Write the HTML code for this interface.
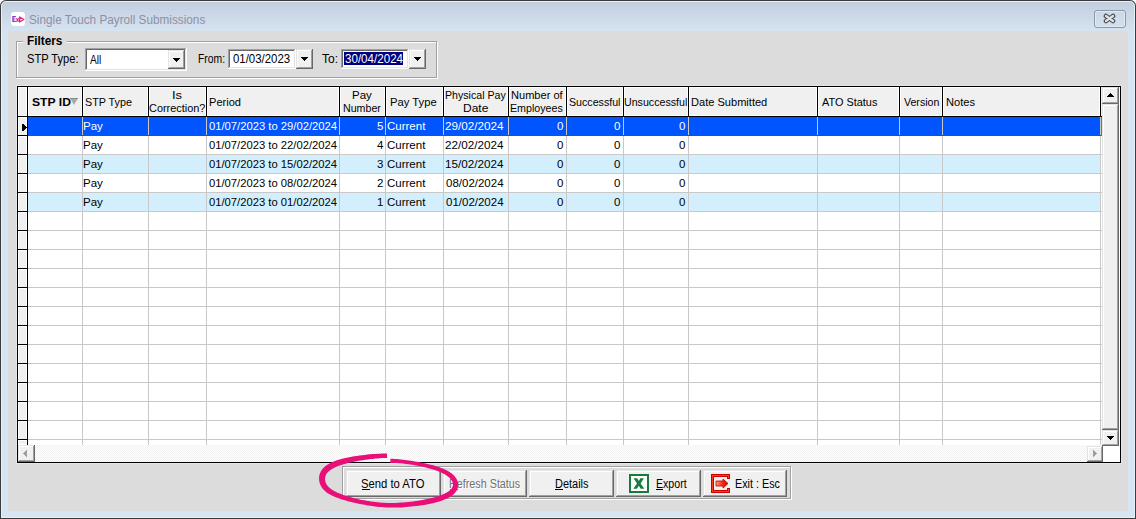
<!DOCTYPE html>
<html><head><meta charset="utf-8"><style>
html,body{margin:0;padding:0;}
body{width:1136px;height:519px;overflow:hidden;position:relative;background:#fff;font-family:"Liberation Sans", sans-serif;}
div{position:absolute;box-sizing:border-box;}
.tx{position:absolute;white-space:pre;line-height:20px;transform-origin:0 0;font-family:"Liberation Sans", sans-serif;}
</style></head><body>
<div style="left:0px;top:0px;width:1136px;height:519px;background:linear-gradient(#bfcddc 0px,#c9d7e6 14px,#d5e2f0 30px,#d7e4f2 60px);border-radius:6px 6px 0 0;box-shadow:inset 0 0 0 1px #3b3b3b, inset 0 0 0 2px #e9f0f7"></div>
<div style="left:11px;top:12px;width:14px;height:14px;background:#fff;border-radius:3px"></div>
<svg style="position:absolute;left:11px;top:12px" width="14" height="14" viewBox="0 0 14 14"><defs><linearGradient id="eg" x1="0" x2="1"><stop offset="0" stop-color="#7b2fb8"/><stop offset="1" stop-color="#ea2a7a"/></linearGradient></defs><path d="M1.3 4 H4.8 V5.2 H2.6 V6.4 H4.4 V7.6 H2.6 V8.8 H4.8 V10 H1.3 Z" fill="#8a35c0"/><path d="M5.4 6.2 L7.6 9.8 M7.6 6.2 L5.4 9.8" stroke="#b02aa0" stroke-width="1.1"/><path d="M8.6 5 L12.8 7.5 L8.6 10 Z" fill="none" stroke="#e8287e" stroke-width="1.4" stroke-linejoin="round"/></svg>
<div style="left:1094px;top:10px;width:32px;height:18px;border:1px solid #8d98a6;border-radius:3px;box-sizing:border-box;background:linear-gradient(#ccd8e5,#d4e0ed);box-shadow:inset 0 0 0 1px #e3eaf2"></div>
<svg style="position:absolute;left:1103px;top:13px" width="14" height="12" viewBox="0 0 14 12"><path d="M3 3 L10 8 M10 3 L3 8" stroke="#434956" stroke-width="4.6" fill="none" stroke-linecap="round"/><path d="M3 3 L10 8 M10 3 L3 8" stroke="#e2e2e4" stroke-width="2.3" fill="none" stroke-linecap="round"/></svg>
<div style="left:8px;top:31px;width:1120px;height:480px;background:#dcdcdc"></div>
<div style="left:17px;top:42px;width:421px;height:37px;border:1px solid #fff;box-sizing:border-box"></div><div style="left:16px;top:41px;width:421px;height:37px;border:1px solid #a0a0a0;box-sizing:border-box"></div>
<div style="left:23px;top:34px;width:44px;height:12px;background:#dcdcdc"></div>
<div style="left:85px;top:48px;width:102px;height:23px;background:#fff"></div><div style="left:85px;top:48px;width:101px;height:22px;background:#a0a0a0"></div><div style="left:86px;top:49px;width:100px;height:21px;background:#e3e3e3"></div><div style="left:86px;top:49px;width:99px;height:20px;background:#696969"></div><div style="left:87px;top:50px;width:98px;height:19px;background:#fff"></div>
<div style="left:168px;top:50px;width:17px;height:19px;background:#696969"></div><div style="left:168px;top:50px;width:16px;height:18px;background:#e3e3e3"></div><div style="left:169px;top:51px;width:15px;height:17px;background:#a0a0a0"></div><div style="left:169px;top:51px;width:14px;height:16px;background:#fff"></div><div style="left:170px;top:52px;width:13px;height:15px;background:#f0f0f0"></div>
<div style="left:173px;top:58px;width:7px;height:1px;background:#000"></div><div style="left:174px;top:59px;width:5px;height:1px;background:#000"></div><div style="left:175px;top:60px;width:3px;height:1px;background:#000"></div><div style="left:176px;top:61px;width:1px;height:1px;background:#000"></div>
<div style="left:228px;top:49px;width:68px;height:20px;background:#fff"></div><div style="left:228px;top:49px;width:67px;height:19px;background:#a0a0a0"></div><div style="left:229px;top:50px;width:66px;height:18px;background:#e3e3e3"></div><div style="left:229px;top:50px;width:65px;height:17px;background:#696969"></div><div style="left:230px;top:51px;width:64px;height:16px;background:#fff"></div>
<div style="left:296px;top:49px;width:17px;height:20px;background:#696969"></div><div style="left:296px;top:49px;width:16px;height:19px;background:#e3e3e3"></div><div style="left:297px;top:50px;width:15px;height:18px;background:#a0a0a0"></div><div style="left:297px;top:50px;width:14px;height:17px;background:#fff"></div><div style="left:298px;top:51px;width:13px;height:16px;background:#f0f0f0"></div>
<div style="left:301px;top:57px;width:7px;height:1px;background:#000"></div><div style="left:302px;top:58px;width:5px;height:1px;background:#000"></div><div style="left:303px;top:59px;width:3px;height:1px;background:#000"></div><div style="left:304px;top:60px;width:1px;height:1px;background:#000"></div>
<div style="left:341px;top:49px;width:68px;height:20px;background:#fff"></div><div style="left:341px;top:49px;width:67px;height:19px;background:#a0a0a0"></div><div style="left:342px;top:50px;width:66px;height:18px;background:#e3e3e3"></div><div style="left:342px;top:50px;width:65px;height:17px;background:#696969"></div><div style="left:343px;top:51px;width:64px;height:16px;background:#fff"></div>
<div style="left:344px;top:52px;width:59px;height:13px;background:#000080"></div>
<div style="left:409px;top:49px;width:17px;height:20px;background:#696969"></div><div style="left:409px;top:49px;width:16px;height:19px;background:#e3e3e3"></div><div style="left:410px;top:50px;width:15px;height:18px;background:#a0a0a0"></div><div style="left:410px;top:50px;width:14px;height:17px;background:#fff"></div><div style="left:411px;top:51px;width:13px;height:16px;background:#f0f0f0"></div>
<div style="left:414px;top:57px;width:7px;height:1px;background:#000"></div><div style="left:415px;top:58px;width:5px;height:1px;background:#000"></div><div style="left:416px;top:59px;width:3px;height:1px;background:#000"></div><div style="left:417px;top:60px;width:1px;height:1px;background:#000"></div>
<div style="left:16px;top:85px;width:1106px;height:379px;background:#e6e6e6"></div>
<div style="left:17px;top:86px;width:1104px;height:377px;background:#000"></div>
<div style="left:18px;top:87px;width:1102px;height:375px;background:#fff"></div>
<div style="left:18px;top:87px;width:1084px;height:29px;background:#f0f0f0"></div>
<div style="left:18px;top:116px;width:1084px;height:1px;background:#000"></div>
<div style="left:18px;top:87px;width:9px;height:29px;border:1px solid #fff;border-right-color:#fff;box-sizing:border-box"></div>
<div style="left:27px;top:87px;width:1px;height:29px;background:#000"></div>
<div style="left:28px;top:87px;width:54px;height:29px;border:1px solid #fff;border-right-color:#fff;box-sizing:border-box"></div>
<div style="left:82px;top:87px;width:1px;height:29px;background:#000"></div>
<div style="left:83px;top:87px;width:65px;height:29px;border:1px solid #fff;border-right-color:#fff;box-sizing:border-box"></div>
<div style="left:148px;top:87px;width:1px;height:29px;background:#000"></div>
<div style="left:149px;top:87px;width:57px;height:29px;border:1px solid #fff;border-right-color:#fff;box-sizing:border-box"></div>
<div style="left:206px;top:87px;width:1px;height:29px;background:#000"></div>
<div style="left:207px;top:87px;width:132px;height:29px;border:1px solid #fff;border-right-color:#fff;box-sizing:border-box"></div>
<div style="left:339px;top:87px;width:1px;height:29px;background:#000"></div>
<div style="left:340px;top:87px;width:45px;height:29px;border:1px solid #fff;border-right-color:#fff;box-sizing:border-box"></div>
<div style="left:385px;top:87px;width:1px;height:29px;background:#000"></div>
<div style="left:386px;top:87px;width:57px;height:29px;border:1px solid #fff;border-right-color:#fff;box-sizing:border-box"></div>
<div style="left:443px;top:87px;width:1px;height:29px;background:#000"></div>
<div style="left:444px;top:87px;width:64px;height:29px;border:1px solid #fff;border-right-color:#fff;box-sizing:border-box"></div>
<div style="left:508px;top:87px;width:1px;height:29px;background:#000"></div>
<div style="left:509px;top:87px;width:57px;height:29px;border:1px solid #fff;border-right-color:#fff;box-sizing:border-box"></div>
<div style="left:566px;top:87px;width:1px;height:29px;background:#000"></div>
<div style="left:567px;top:87px;width:56px;height:29px;border:1px solid #fff;border-right-color:#fff;box-sizing:border-box"></div>
<div style="left:623px;top:87px;width:1px;height:29px;background:#000"></div>
<div style="left:624px;top:87px;width:64px;height:29px;border:1px solid #fff;border-right-color:#fff;box-sizing:border-box"></div>
<div style="left:688px;top:87px;width:1px;height:29px;background:#000"></div>
<div style="left:689px;top:87px;width:128px;height:29px;border:1px solid #fff;border-right-color:#fff;box-sizing:border-box"></div>
<div style="left:817px;top:87px;width:1px;height:29px;background:#000"></div>
<div style="left:818px;top:87px;width:81px;height:29px;border:1px solid #fff;border-right-color:#fff;box-sizing:border-box"></div>
<div style="left:899px;top:87px;width:1px;height:29px;background:#000"></div>
<div style="left:900px;top:87px;width:42px;height:29px;border:1px solid #fff;border-right-color:#fff;box-sizing:border-box"></div>
<div style="left:942px;top:87px;width:1px;height:29px;background:#000"></div>
<div style="left:943px;top:87px;width:157px;height:29px;border:1px solid #fff;border-right-color:#fff;box-sizing:border-box"></div>
<div style="left:1100px;top:87px;width:1px;height:29px;background:#000"></div>
<div style="left:28px;top:117px;width:1074px;height:19px;background:#0055ff"></div>
<div style="left:1101px;top:117px;width:1px;height:19px;background:#2a7dff"></div>
<div style="left:18px;top:117px;width:9px;height:19px;background:#f0f0f0;border:1px solid #fff"></div>
<div style="left:18px;top:135px;width:9px;height:1px;background:#000"></div>
<div style="left:28px;top:136px;width:1073px;height:19px;background:#fff"></div>
<div style="left:28px;top:154px;width:1074px;height:1px;background:#c8c8c8"></div>
<div style="left:18px;top:136px;width:9px;height:19px;background:#f0f0f0;border:1px solid #fff"></div>
<div style="left:18px;top:154px;width:9px;height:1px;background:#000"></div>
<div style="left:28px;top:155px;width:1073px;height:19px;background:#d3effd"></div>
<div style="left:28px;top:173px;width:1074px;height:1px;background:#c8c8c8"></div>
<div style="left:18px;top:155px;width:9px;height:19px;background:#f0f0f0;border:1px solid #fff"></div>
<div style="left:18px;top:173px;width:9px;height:1px;background:#000"></div>
<div style="left:28px;top:174px;width:1073px;height:19px;background:#fff"></div>
<div style="left:28px;top:192px;width:1074px;height:1px;background:#c8c8c8"></div>
<div style="left:18px;top:174px;width:9px;height:19px;background:#f0f0f0;border:1px solid #fff"></div>
<div style="left:18px;top:192px;width:9px;height:1px;background:#000"></div>
<div style="left:28px;top:193px;width:1073px;height:19px;background:#d3effd"></div>
<div style="left:28px;top:211px;width:1074px;height:1px;background:#c8c8c8"></div>
<div style="left:18px;top:193px;width:9px;height:19px;background:#f0f0f0;border:1px solid #fff"></div>
<div style="left:18px;top:211px;width:9px;height:1px;background:#000"></div>
<div style="left:28px;top:212px;width:1073px;height:19px;background:#fff"></div>
<div style="left:28px;top:230px;width:1074px;height:1px;background:#c8c8c8"></div>
<div style="left:18px;top:212px;width:9px;height:19px;background:#f0f0f0;border:1px solid #fff"></div>
<div style="left:18px;top:230px;width:9px;height:1px;background:#000"></div>
<div style="left:28px;top:231px;width:1073px;height:19px;background:#fff"></div>
<div style="left:28px;top:249px;width:1074px;height:1px;background:#c8c8c8"></div>
<div style="left:18px;top:231px;width:9px;height:19px;background:#f0f0f0;border:1px solid #fff"></div>
<div style="left:18px;top:249px;width:9px;height:1px;background:#000"></div>
<div style="left:28px;top:250px;width:1073px;height:19px;background:#fff"></div>
<div style="left:28px;top:268px;width:1074px;height:1px;background:#c8c8c8"></div>
<div style="left:18px;top:250px;width:9px;height:19px;background:#f0f0f0;border:1px solid #fff"></div>
<div style="left:18px;top:268px;width:9px;height:1px;background:#000"></div>
<div style="left:28px;top:269px;width:1073px;height:19px;background:#fff"></div>
<div style="left:28px;top:287px;width:1074px;height:1px;background:#c8c8c8"></div>
<div style="left:18px;top:269px;width:9px;height:19px;background:#f0f0f0;border:1px solid #fff"></div>
<div style="left:18px;top:287px;width:9px;height:1px;background:#000"></div>
<div style="left:28px;top:288px;width:1073px;height:19px;background:#fff"></div>
<div style="left:28px;top:306px;width:1074px;height:1px;background:#c8c8c8"></div>
<div style="left:18px;top:288px;width:9px;height:19px;background:#f0f0f0;border:1px solid #fff"></div>
<div style="left:18px;top:306px;width:9px;height:1px;background:#000"></div>
<div style="left:28px;top:307px;width:1073px;height:19px;background:#fff"></div>
<div style="left:28px;top:325px;width:1074px;height:1px;background:#c8c8c8"></div>
<div style="left:18px;top:307px;width:9px;height:19px;background:#f0f0f0;border:1px solid #fff"></div>
<div style="left:18px;top:325px;width:9px;height:1px;background:#000"></div>
<div style="left:28px;top:326px;width:1073px;height:19px;background:#fff"></div>
<div style="left:28px;top:344px;width:1074px;height:1px;background:#c8c8c8"></div>
<div style="left:18px;top:326px;width:9px;height:19px;background:#f0f0f0;border:1px solid #fff"></div>
<div style="left:18px;top:344px;width:9px;height:1px;background:#000"></div>
<div style="left:28px;top:345px;width:1073px;height:19px;background:#fff"></div>
<div style="left:28px;top:363px;width:1074px;height:1px;background:#c8c8c8"></div>
<div style="left:18px;top:345px;width:9px;height:19px;background:#f0f0f0;border:1px solid #fff"></div>
<div style="left:18px;top:363px;width:9px;height:1px;background:#000"></div>
<div style="left:28px;top:364px;width:1073px;height:19px;background:#fff"></div>
<div style="left:28px;top:382px;width:1074px;height:1px;background:#c8c8c8"></div>
<div style="left:18px;top:364px;width:9px;height:19px;background:#f0f0f0;border:1px solid #fff"></div>
<div style="left:18px;top:382px;width:9px;height:1px;background:#000"></div>
<div style="left:28px;top:383px;width:1073px;height:19px;background:#fff"></div>
<div style="left:28px;top:401px;width:1074px;height:1px;background:#c8c8c8"></div>
<div style="left:18px;top:383px;width:9px;height:19px;background:#f0f0f0;border:1px solid #fff"></div>
<div style="left:18px;top:401px;width:9px;height:1px;background:#000"></div>
<div style="left:28px;top:402px;width:1073px;height:19px;background:#fff"></div>
<div style="left:28px;top:420px;width:1074px;height:1px;background:#c8c8c8"></div>
<div style="left:18px;top:402px;width:9px;height:19px;background:#f0f0f0;border:1px solid #fff"></div>
<div style="left:18px;top:420px;width:9px;height:1px;background:#000"></div>
<div style="left:28px;top:421px;width:1073px;height:19px;background:#fff"></div>
<div style="left:28px;top:439px;width:1074px;height:1px;background:#c8c8c8"></div>
<div style="left:18px;top:421px;width:9px;height:19px;background:#f0f0f0;border:1px solid #fff"></div>
<div style="left:18px;top:439px;width:9px;height:1px;background:#000"></div>
<div style="left:28px;top:440px;width:1073px;height:5px;background:#fff"></div>
<div style="left:18px;top:440px;width:9px;height:5px;background:#f0f0f0;border:1px solid #fff"></div>
<div style="left:82px;top:117px;width:1px;height:18px;background:#c8c8c8"></div>
<div style="left:82px;top:136px;width:1px;height:309px;background:#c8c8c8"></div>
<div style="left:148px;top:117px;width:1px;height:18px;background:#c8c8c8"></div>
<div style="left:148px;top:136px;width:1px;height:309px;background:#c8c8c8"></div>
<div style="left:206px;top:117px;width:1px;height:18px;background:#c8c8c8"></div>
<div style="left:206px;top:136px;width:1px;height:309px;background:#c8c8c8"></div>
<div style="left:339px;top:117px;width:1px;height:18px;background:#c8c8c8"></div>
<div style="left:339px;top:136px;width:1px;height:309px;background:#c8c8c8"></div>
<div style="left:385px;top:117px;width:1px;height:18px;background:#c8c8c8"></div>
<div style="left:385px;top:136px;width:1px;height:309px;background:#c8c8c8"></div>
<div style="left:443px;top:117px;width:1px;height:18px;background:#c8c8c8"></div>
<div style="left:443px;top:136px;width:1px;height:309px;background:#c8c8c8"></div>
<div style="left:508px;top:117px;width:1px;height:18px;background:#c8c8c8"></div>
<div style="left:508px;top:136px;width:1px;height:309px;background:#c8c8c8"></div>
<div style="left:566px;top:117px;width:1px;height:18px;background:#c8c8c8"></div>
<div style="left:566px;top:136px;width:1px;height:309px;background:#c8c8c8"></div>
<div style="left:623px;top:117px;width:1px;height:18px;background:#c8c8c8"></div>
<div style="left:623px;top:136px;width:1px;height:309px;background:#c8c8c8"></div>
<div style="left:688px;top:117px;width:1px;height:18px;background:#c8c8c8"></div>
<div style="left:688px;top:136px;width:1px;height:309px;background:#c8c8c8"></div>
<div style="left:817px;top:117px;width:1px;height:18px;background:#c8c8c8"></div>
<div style="left:817px;top:136px;width:1px;height:309px;background:#c8c8c8"></div>
<div style="left:899px;top:117px;width:1px;height:18px;background:#c8c8c8"></div>
<div style="left:899px;top:136px;width:1px;height:309px;background:#c8c8c8"></div>
<div style="left:942px;top:117px;width:1px;height:18px;background:#c8c8c8"></div>
<div style="left:942px;top:136px;width:1px;height:309px;background:#c8c8c8"></div>
<div style="left:1100px;top:117px;width:1px;height:18px;background:#c8c8c8"></div>
<div style="left:1100px;top:136px;width:1px;height:309px;background:#c8c8c8"></div>
<div style="left:27px;top:117px;width:1px;height:328px;background:#000"></div>
<div style="left:22px;top:124px;width:1px;height:7px;background:#000"></div><div style="left:23px;top:124px;width:1px;height:7px;background:#000"></div><div style="left:24px;top:125px;width:1px;height:5px;background:#000"></div><div style="left:25px;top:126px;width:1px;height:3px;background:#000"></div><div style="left:26px;top:127px;width:1px;height:1px;background:#000"></div>
<svg style="position:absolute;left:70px;top:98px" width="8" height="7" viewBox="0 0 8 7"><path d="M0 0 H8 L4 7 Z" fill="#a9a9a9"/><path d="M0 0.5 H8" stroke="#8a8a8a" stroke-width="1"/></svg>
<div style="left:1102px;top:87px;width:18px;height:358px;background:#fff"></div>
<div style="left:1102px;top:87px;width:17px;height:17px;background:#696969"></div><div style="left:1102px;top:87px;width:16px;height:16px;background:#e3e3e3"></div><div style="left:1103px;top:88px;width:15px;height:15px;background:#a0a0a0"></div><div style="left:1103px;top:88px;width:14px;height:14px;background:#fff"></div><div style="left:1104px;top:89px;width:13px;height:13px;background:#f0f0f0"></div>
<div style="left:1107px;top:96px;width:7px;height:1px;background:#000"></div><div style="left:1108px;top:95px;width:5px;height:1px;background:#000"></div><div style="left:1109px;top:94px;width:3px;height:1px;background:#000"></div><div style="left:1110px;top:93px;width:1px;height:1px;background:#000"></div>
<div style="left:1102px;top:104px;width:17px;height:326px;background:#696969"></div><div style="left:1102px;top:104px;width:16px;height:325px;background:#e3e3e3"></div><div style="left:1103px;top:105px;width:15px;height:324px;background:#a0a0a0"></div><div style="left:1103px;top:105px;width:14px;height:323px;background:#fff"></div><div style="left:1104px;top:106px;width:13px;height:322px;background:#f0f0f0"></div>
<div style="left:1102px;top:430px;width:17px;height:16px;background:#696969"></div><div style="left:1102px;top:430px;width:16px;height:15px;background:#e3e3e3"></div><div style="left:1103px;top:431px;width:15px;height:14px;background:#a0a0a0"></div><div style="left:1103px;top:431px;width:14px;height:13px;background:#fff"></div><div style="left:1104px;top:432px;width:13px;height:12px;background:#f0f0f0"></div>
<div style="left:1107px;top:436px;width:7px;height:1px;background:#000"></div><div style="left:1108px;top:437px;width:5px;height:1px;background:#000"></div><div style="left:1109px;top:438px;width:3px;height:1px;background:#000"></div><div style="left:1110px;top:439px;width:1px;height:1px;background:#000"></div>
<div style="left:18px;top:445px;width:1084px;height:17px;background:repeating-conic-gradient(#f0f0f0 0 25%, #fff 0 50%) 0 0/2px 2px"></div>
<div style="left:18px;top:445px;width:17px;height:17px;background:#696969"></div><div style="left:18px;top:445px;width:16px;height:16px;background:#e3e3e3"></div><div style="left:19px;top:446px;width:15px;height:15px;background:#a0a0a0"></div><div style="left:19px;top:446px;width:14px;height:14px;background:#fff"></div><div style="left:20px;top:447px;width:13px;height:13px;background:#f0f0f0"></div>
<div style="left:26px;top:450px;width:1px;height:7px;background:#a0a0a0"></div><div style="left:25px;top:451px;width:1px;height:5px;background:#a0a0a0"></div><div style="left:24px;top:452px;width:1px;height:3px;background:#a0a0a0"></div><div style="left:23px;top:453px;width:1px;height:1px;background:#a0a0a0"></div>
<div style="left:1087px;top:446px;width:16px;height:16px;background:#696969"></div><div style="left:1087px;top:446px;width:15px;height:15px;background:#e3e3e3"></div><div style="left:1088px;top:447px;width:14px;height:14px;background:#a0a0a0"></div><div style="left:1088px;top:447px;width:13px;height:13px;background:#fff"></div><div style="left:1089px;top:448px;width:12px;height:12px;background:#f0f0f0"></div>
<div style="left:1093px;top:450px;width:1px;height:7px;background:#a0a0a0"></div><div style="left:1094px;top:451px;width:1px;height:5px;background:#a0a0a0"></div><div style="left:1095px;top:452px;width:1px;height:3px;background:#a0a0a0"></div><div style="left:1096px;top:453px;width:1px;height:1px;background:#a0a0a0"></div>
<div style="left:1103px;top:446px;width:17px;height:16px;background:#fff"></div>
<div style="left:343px;top:467px;width:449px;height:33px;border:1px solid #fff;box-sizing:border-box"></div><div style="left:342px;top:466px;width:449px;height:33px;border:1px solid #a0a0a0;box-sizing:border-box"></div>
<div style="left:346px;top:470px;width:95px;height:27px;background:#696969"></div><div style="left:346px;top:470px;width:94px;height:26px;background:#e3e3e3"></div><div style="left:347px;top:471px;width:93px;height:25px;background:#a0a0a0"></div><div style="left:347px;top:471px;width:92px;height:24px;background:#fff"></div><div style="left:348px;top:472px;width:91px;height:23px;background:#f0f0f0"></div>
<div style="left:443px;top:470px;width:84px;height:27px;background:#696969"></div><div style="left:443px;top:470px;width:83px;height:26px;background:#e3e3e3"></div><div style="left:444px;top:471px;width:82px;height:25px;background:#a0a0a0"></div><div style="left:444px;top:471px;width:81px;height:24px;background:#fff"></div><div style="left:445px;top:472px;width:80px;height:23px;background:#f0f0f0"></div>
<div style="left:529px;top:470px;width:85px;height:27px;background:#696969"></div><div style="left:529px;top:470px;width:84px;height:26px;background:#e3e3e3"></div><div style="left:530px;top:471px;width:83px;height:25px;background:#a0a0a0"></div><div style="left:530px;top:471px;width:82px;height:24px;background:#fff"></div><div style="left:531px;top:472px;width:81px;height:23px;background:#f0f0f0"></div>
<div style="left:616px;top:470px;width:85px;height:27px;background:#696969"></div><div style="left:616px;top:470px;width:84px;height:26px;background:#e3e3e3"></div><div style="left:617px;top:471px;width:83px;height:25px;background:#a0a0a0"></div><div style="left:617px;top:471px;width:82px;height:24px;background:#fff"></div><div style="left:618px;top:472px;width:81px;height:23px;background:#f0f0f0"></div>
<div style="left:703px;top:470px;width:84px;height:27px;background:#696969"></div><div style="left:703px;top:470px;width:83px;height:26px;background:#e3e3e3"></div><div style="left:704px;top:471px;width:82px;height:25px;background:#a0a0a0"></div><div style="left:704px;top:471px;width:81px;height:24px;background:#fff"></div><div style="left:705px;top:472px;width:80px;height:23px;background:#f0f0f0"></div>
<div style="left:362px;top:489px;width:8px;height:1px;background:#000"></div>
<div style="left:450px;top:489px;width:8px;height:1px;background:#6d6d6d"></div>
<div style="left:555px;top:489px;width:8px;height:1px;background:#000"></div>
<div style="left:656px;top:489px;width:7px;height:1px;background:#000"></div>
<svg style="position:absolute;left:629px;top:474px" width="20" height="19" viewBox="0 0 20 19"><rect x="1" y="1" width="18" height="17" fill="#fff" stroke="#177a3e" stroke-width="2"/><path d="M4.6 4.3 H8.2 L9.8 7.0 L11.4 4.3 H14.9 L11.6 9.4 L15.3 14.8 H11.7 L9.8 11.8 L7.9 14.8 H4.3 L8.0 9.4 Z" fill="#177a3e"/></svg>
<svg style="position:absolute;left:711px;top:474px" width="19" height="19" viewBox="0 0 19 19"><path d="M0 0 H19 V5 H16 V3 H3 V16 H16 V14 H19 V19 H0 Z" fill="#d00000"/><path d="M1 1 H18 V4 H17 V2 H2 V17 H17 V15 H18 V18 H1 Z" fill="#ff3c10"/><defs><linearGradient id="ag" x1="0" x2="1"><stop offset="0" stop-color="#ff9a80"/><stop offset="0.5" stop-color="#ff3010"/><stop offset="1" stop-color="#c80000"/></linearGradient></defs><path d="M5 7 H12 V5 L17 9.5 L12 14 V12 H5 Z" fill="url(#ag)" stroke="#c00000" stroke-width="0.8"/></svg>
<span class="tx" style="left:29.06px;top:10px;font-size:12.5px;font-weight:normal;color:#8f90a2;transform:scaleX(0.9409)">Single Touch Payroll Submissions</span>
<span class="tx" style="left:27.06px;top:31px;font-size:12.5px;font-weight:bold;color:#000;transform:scaleX(0.9444)">Filters</span>
<span class="tx" style="left:27.07px;top:49px;font-size:12px;font-weight:normal;color:#000;transform:scaleX(0.9259)">STP Type:</span>
<span class="tx" style="left:90.00px;top:50px;font-size:12px;font-weight:normal;color:#000;transform:scaleX(0.8462)">All</span>
<span class="tx" style="left:198.14px;top:49px;font-size:12px;font-weight:normal;color:#000;transform:scaleX(0.8621)">From:</span>
<span class="tx" style="left:233.00px;top:49px;font-size:12px;font-weight:normal;color:#000;transform:scaleX(0.9500)">01/03/2023</span>
<span class="tx" style="left:322.00px;top:49px;font-size:12px;font-weight:normal;color:#000;transform:scaleX(1.0000)">To:</span>
<span class="tx" style="left:345.03px;top:49px;font-size:12px;font-weight:normal;color:#fff;transform:scaleX(0.9661)">30/04/2024</span>
<span class="tx" style="left:32.00px;top:92px;font-size:11.5px;font-weight:bold;color:#000;transform:scaleX(1.0556)">STP ID</span>
<span class="tx" style="left:85.06px;top:92px;font-size:11.5px;font-weight:normal;color:#000;transform:scaleX(0.9388)">STP Type</span>
<span class="tx" style="left:171.88px;top:85px;font-size:11.5px;font-weight:normal;color:#000;transform:scaleX(1.1250)">Is</span>
<span class="tx" style="left:149.05px;top:98px;font-size:11.5px;font-weight:normal;color:#000;transform:scaleX(0.9483)">Correction?</span>
<span class="tx" style="left:209.04px;top:92px;font-size:11.5px;font-weight:normal;color:#000;transform:scaleX(0.9623)">Period</span>
<span class="tx" style="left:352.00px;top:85px;font-size:11.5px;font-weight:normal;color:#000;transform:scaleX(1.0000)">Pay</span>
<span class="tx" style="left:343.07px;top:98px;font-size:11.5px;font-weight:normal;color:#000;transform:scaleX(0.9250)">Number</span>
<span class="tx" style="left:390.02px;top:92px;font-size:11.5px;font-weight:normal;color:#000;transform:scaleX(0.9783)">Pay Type</span>
<span class="tx" style="left:445.08px;top:85px;font-size:11.5px;font-weight:normal;color:#000;transform:scaleX(0.9231)">Physical Pay</span>
<span class="tx" style="left:462.96px;top:98px;font-size:11.5px;font-weight:normal;color:#000;transform:scaleX(1.0435)">Date</span>
<span class="tx" style="left:511.04px;top:85px;font-size:11.5px;font-weight:normal;color:#000;transform:scaleX(0.9623)">Number of</span>
<span class="tx" style="left:510.07px;top:98px;font-size:11.5px;font-weight:normal;color:#000;transform:scaleX(0.9286)">Employees</span>
<span class="tx" style="left:569.07px;top:92px;font-size:11.5px;font-weight:normal;color:#000;transform:scaleX(0.9259)">Successful</span>
<span class="tx" style="left:624.07px;top:92px;font-size:11.5px;font-weight:normal;color:#000;transform:scaleX(0.9254)">Unsuccessful</span>
<span class="tx" style="left:691.04px;top:92px;font-size:11.5px;font-weight:normal;color:#000;transform:scaleX(0.9623)">Date Submitted</span>
<span class="tx" style="left:822.00px;top:92px;font-size:11.5px;font-weight:normal;color:#000;transform:scaleX(0.9483)">ATO Status</span>
<span class="tx" style="left:904.00px;top:92px;font-size:11.5px;font-weight:normal;color:#000;transform:scaleX(0.9211)">Version</span>
<span class="tx" style="left:946.03px;top:92px;font-size:11.5px;font-weight:normal;color:#000;transform:scaleX(0.9655)">Notes</span>
<span class="tx" style="left:83.00px;top:116px;font-size:11.5px;font-weight:normal;color:#fff;transform:scaleX(1.0000)">Pay</span>
<span class="tx" style="left:209.00px;top:116px;font-size:11.5px;font-weight:normal;color:#fff;transform:scaleX(0.9771)">01/07/2023 to 29/02/2024</span>
<span class="tx" style="left:377.00px;top:116px;font-size:11.5px;font-weight:normal;color:#fff;transform:scaleX(1.0000)">5</span>
<span class="tx" style="left:387.00px;top:116px;font-size:11.5px;font-weight:normal;color:#fff;transform:scaleX(1.0000)">Current</span>
<span class="tx" style="left:444.98px;top:116px;font-size:11.5px;font-weight:normal;color:#fff;transform:scaleX(1.0179)">29/02/2024</span>
<span class="tx" style="left:557.00px;top:116px;font-size:11.5px;font-weight:normal;color:#fff;transform:scaleX(1.0000)">0</span>
<span class="tx" style="left:614.00px;top:116px;font-size:11.5px;font-weight:normal;color:#fff;transform:scaleX(1.0000)">0</span>
<span class="tx" style="left:679.00px;top:116px;font-size:11.5px;font-weight:normal;color:#fff;transform:scaleX(1.0000)">0</span>
<span class="tx" style="left:83.00px;top:135px;font-size:11.5px;font-weight:normal;color:#000;transform:scaleX(1.0000)">Pay</span>
<span class="tx" style="left:209.00px;top:135px;font-size:11.5px;font-weight:normal;color:#000;transform:scaleX(0.9771)">01/07/2023 to 22/02/2024</span>
<span class="tx" style="left:377.00px;top:135px;font-size:11.5px;font-weight:normal;color:#000;transform:scaleX(1.0000)">4</span>
<span class="tx" style="left:387.00px;top:135px;font-size:11.5px;font-weight:normal;color:#000;transform:scaleX(1.0000)">Current</span>
<span class="tx" style="left:444.98px;top:135px;font-size:11.5px;font-weight:normal;color:#000;transform:scaleX(1.0179)">22/02/2024</span>
<span class="tx" style="left:557.00px;top:135px;font-size:11.5px;font-weight:normal;color:#000;transform:scaleX(1.0000)">0</span>
<span class="tx" style="left:614.00px;top:135px;font-size:11.5px;font-weight:normal;color:#000;transform:scaleX(1.0000)">0</span>
<span class="tx" style="left:679.00px;top:135px;font-size:11.5px;font-weight:normal;color:#000;transform:scaleX(1.0000)">0</span>
<span class="tx" style="left:83.00px;top:154px;font-size:11.5px;font-weight:normal;color:#000;transform:scaleX(1.0000)">Pay</span>
<span class="tx" style="left:209.00px;top:154px;font-size:11.5px;font-weight:normal;color:#000;transform:scaleX(0.9771)">01/07/2023 to 15/02/2024</span>
<span class="tx" style="left:377.00px;top:154px;font-size:11.5px;font-weight:normal;color:#000;transform:scaleX(1.0000)">3</span>
<span class="tx" style="left:387.00px;top:154px;font-size:11.5px;font-weight:normal;color:#000;transform:scaleX(1.0000)">Current</span>
<span class="tx" style="left:444.98px;top:154px;font-size:11.5px;font-weight:normal;color:#000;transform:scaleX(1.0179)">15/02/2024</span>
<span class="tx" style="left:557.00px;top:154px;font-size:11.5px;font-weight:normal;color:#000;transform:scaleX(1.0000)">0</span>
<span class="tx" style="left:614.00px;top:154px;font-size:11.5px;font-weight:normal;color:#000;transform:scaleX(1.0000)">0</span>
<span class="tx" style="left:679.00px;top:154px;font-size:11.5px;font-weight:normal;color:#000;transform:scaleX(1.0000)">0</span>
<span class="tx" style="left:83.00px;top:173px;font-size:11.5px;font-weight:normal;color:#000;transform:scaleX(1.0000)">Pay</span>
<span class="tx" style="left:209.00px;top:173px;font-size:11.5px;font-weight:normal;color:#000;transform:scaleX(0.9771)">01/07/2023 to 08/02/2024</span>
<span class="tx" style="left:377.00px;top:173px;font-size:11.5px;font-weight:normal;color:#000;transform:scaleX(1.0000)">2</span>
<span class="tx" style="left:387.00px;top:173px;font-size:11.5px;font-weight:normal;color:#000;transform:scaleX(1.0000)">Current</span>
<span class="tx" style="left:446.00px;top:173px;font-size:11.5px;font-weight:normal;color:#000;transform:scaleX(1.0000)">08/02/2024</span>
<span class="tx" style="left:557.00px;top:173px;font-size:11.5px;font-weight:normal;color:#000;transform:scaleX(1.0000)">0</span>
<span class="tx" style="left:614.00px;top:173px;font-size:11.5px;font-weight:normal;color:#000;transform:scaleX(1.0000)">0</span>
<span class="tx" style="left:679.00px;top:173px;font-size:11.5px;font-weight:normal;color:#000;transform:scaleX(1.0000)">0</span>
<span class="tx" style="left:83.00px;top:192px;font-size:11.5px;font-weight:normal;color:#000;transform:scaleX(1.0000)">Pay</span>
<span class="tx" style="left:209.00px;top:192px;font-size:11.5px;font-weight:normal;color:#000;transform:scaleX(0.9771)">01/07/2023 to 01/02/2024</span>
<span class="tx" style="left:377.00px;top:192px;font-size:11.5px;font-weight:normal;color:#000;transform:scaleX(1.0000)">1</span>
<span class="tx" style="left:387.00px;top:192px;font-size:11.5px;font-weight:normal;color:#000;transform:scaleX(1.0000)">Current</span>
<span class="tx" style="left:446.00px;top:192px;font-size:11.5px;font-weight:normal;color:#000;transform:scaleX(1.0000)">01/02/2024</span>
<span class="tx" style="left:557.00px;top:192px;font-size:11.5px;font-weight:normal;color:#000;transform:scaleX(1.0000)">0</span>
<span class="tx" style="left:614.00px;top:192px;font-size:11.5px;font-weight:normal;color:#000;transform:scaleX(1.0000)">0</span>
<span class="tx" style="left:679.00px;top:192px;font-size:11.5px;font-weight:normal;color:#000;transform:scaleX(1.0000)">0</span>
<span class="tx" style="left:361.06px;top:474px;font-size:12px;font-weight:normal;color:#000;transform:scaleX(0.9394)">Send to ATO</span>
<span class="tx" style="text-shadow:1px 1px 0 #fff;left:449.10px;top:474px;font-size:12px;font-weight:normal;color:#707070;transform:scaleX(0.8974)">Refresh Status</span>
<span class="tx" style="left:555.09px;top:474px;font-size:12px;font-weight:normal;color:#000;transform:scaleX(0.9143)">Details</span>
<span class="tx" style="left:656.12px;top:474px;font-size:12px;font-weight:normal;color:#000;transform:scaleX(0.8824)">Export</span>
<span class="tx" style="left:735.10px;top:474px;font-size:12px;font-weight:normal;color:#000;transform:scaleX(0.8980)">Exit : Esc</span>
<svg style="position:absolute;left:0;top:0" width="1136" height="519"><path d="M390.3 463.0 L392.4 463.0 L394.5 463.0 L396.6 463.1 L398.6 463.2 L400.6 463.3 L402.6 463.5 L404.5 463.7 L406.5 463.9 L408.4 464.2 L410.4 464.5 L412.3 464.8 L414.2 465.1 L416.1 465.5 L418.0 465.8 L420.0 466.2 L421.9 466.6 L423.8 467.0 L425.7 467.5 L427.5 468.0 L429.4 468.4 L431.2 468.9 L433.0 469.5 L434.7 470.0 L436.4 470.6 L438.1 471.2 L439.6 471.8 L441.2 472.5 L442.6 473.2 L444.0 473.9 L445.2 474.6 L446.4 475.4 L447.5 476.2 L448.5 476.9 L449.4 477.8 L450.2 478.6 L450.9 479.4 L451.5 480.2 L452.0 481.1 L452.4 481.9 L452.7 482.7 L452.9 483.4 L452.9 484.2 L453.0 484.9 L452.9 485.6 L452.7 486.3 L452.4 487.0 L452.1 487.8 L451.6 488.5 L451.0 489.3 L450.2 490.0 L449.3 490.8 L448.3 491.6 L447.1 492.3 L445.7 493.1 L444.2 493.8 L442.6 494.5 L440.8 495.2 L439.0 495.9 L437.0 496.6 L434.9 497.2 L432.7 497.8 L430.4 498.3 L428.1 498.8 L425.7 499.3 L423.2 499.8 L420.7 500.3 L418.2 500.7 L415.7 501.0 L413.2 501.4 L410.7 501.7 L408.1 502.0 L405.6 502.2 L403.2 502.5 L400.7 502.6 L398.3 502.8 L395.9 502.9 L393.5 503.0 L391.2 503.0 L388.9 503.0 L386.6 502.9 L384.3 502.8 L382.0 502.7 L379.8 502.5 L377.5 502.3 L375.3 502.1 L373.1 501.8 L370.8 501.5 L368.6 501.1 L366.4 500.7 L364.2 500.3 L361.9 499.9 L359.8 499.4 L357.6 498.9 L355.4 498.4 L353.3 497.9 L351.2 497.3 L349.1 496.7 L347.1 496.1 L345.2 495.5 L343.3 494.9 L341.5 494.3 L339.8 493.6 L338.1 492.9 L336.6 492.2 L335.2 491.5 L333.8 490.8 L332.6 490.1 L331.4 489.3 L330.4 488.6 L329.5 487.8 L328.7 487.1 L328.0 486.3 L327.3 485.5 L326.8 484.7 L326.3 484.0 L325.9 483.2 L325.6 482.4 L325.4 481.6 L325.2 480.8 L325.1 480.0 L325.0 479.2 L325.1 478.4 L325.1 477.7 L325.3 476.9 L325.5 476.1 L325.8 475.3 L326.1 474.6 L326.6 473.8 L327.1 473.1 L327.8 472.3 L328.5 471.5 L329.4 470.8 L330.5 470.0 L331.6 469.2 L332.9 468.5 L334.3 467.7 L335.9 467.0 L337.6 466.3 L339.5 465.6 L341.4 465.0 L343.5 464.3 L345.7 463.7 L347.9 463.1 L350.3 462.6 L352.7 462.0 L355.2 461.5 L357.7 461.1 L360.2 460.6 L362.8 460.2 L365.3 459.8 L367.9 459.5 L370.4 459.1 L372.9 458.9 L375.4 458.6 L377.8 458.4 L380.2 458.2 L382.6 458.1 L384.9 458.0 L387.1 457.9 L387.0 453.6 L384.7 453.6 L382.4 453.6 L380.0 453.7 L377.5 453.8 L375.0 454.0 L372.5 454.1 L369.9 454.3 L367.3 454.6 L364.7 454.9 L362.1 455.2 L359.4 455.5 L356.8 455.9 L354.2 456.3 L351.7 456.7 L349.2 457.2 L346.7 457.7 L344.3 458.3 L342.0 458.8 L339.7 459.5 L337.6 460.1 L335.6 460.8 L333.6 461.6 L331.8 462.3 L330.1 463.2 L328.5 464.1 L327.0 465.0 L325.6 466.0 L324.4 467.0 L323.3 468.1 L322.3 469.3 L321.4 470.5 L320.7 471.7 L320.1 473.0 L319.7 474.3 L319.3 475.6 L319.1 476.9 L319.0 478.2 L319.1 479.5 L319.2 480.8 L319.4 482.0 L319.8 483.3 L320.2 484.5 L320.8 485.7 L321.4 486.8 L322.2 488.0 L323.0 489.0 L323.9 490.1 L325.0 491.0 L326.1 492.0 L327.3 492.9 L328.6 493.7 L330.0 494.5 L331.4 495.3 L333.0 496.1 L334.6 496.8 L336.3 497.5 L338.1 498.1 L339.9 498.8 L341.8 499.4 L343.8 500.0 L345.8 500.6 L347.9 501.2 L350.0 501.7 L352.2 502.2 L354.4 502.8 L356.6 503.3 L358.8 503.7 L361.1 504.2 L363.3 504.6 L365.6 505.1 L367.9 505.4 L370.2 505.8 L372.5 506.1 L374.8 506.4 L377.1 506.7 L379.4 506.9 L381.7 507.1 L384.0 507.3 L386.4 507.4 L388.8 507.5 L391.2 507.5 L393.6 507.6 L396.0 507.5 L398.5 507.5 L401.0 507.4 L403.5 507.2 L406.1 507.0 L408.6 506.8 L411.2 506.6 L413.8 506.3 L416.4 506.0 L419.0 505.7 L421.6 505.3 L424.1 504.9 L426.7 504.4 L429.1 503.9 L431.6 503.4 L434.0 502.9 L436.3 502.3 L438.5 501.7 L440.7 501.0 L442.7 500.3 L444.7 499.5 L446.5 498.7 L448.2 497.9 L449.8 497.0 L451.3 496.0 L452.7 495.0 L453.9 494.0 L455.0 492.8 L455.9 491.6 L456.7 490.4 L457.3 489.1 L457.8 487.8 L458.1 486.4 L458.2 485.0 L458.1 483.7 L457.9 482.4 L457.5 481.1 L456.9 479.8 L456.3 478.6 L455.5 477.4 L454.6 476.3 L453.7 475.3 L452.6 474.3 L451.4 473.3 L450.2 472.4 L448.9 471.6 L447.4 470.8 L446.0 470.0 L444.4 469.3 L442.8 468.6 L441.2 467.9 L439.5 467.3 L437.7 466.7 L435.9 466.2 L434.1 465.6 L432.2 465.1 L430.4 464.7 L428.5 464.2 L426.5 463.8 L424.6 463.3 L422.7 462.9 L420.7 462.5 L418.8 462.1 L416.8 461.8 L414.9 461.4 L412.9 461.1 L410.9 460.7 L409.0 460.4 L407.0 460.2 L405.0 459.9 L403.0 459.7 L401.0 459.4 L398.9 459.2 L396.8 459.1 L394.7 458.9 L392.6 458.8 L390.4 458.8 Z" fill="#ea0e79"/></svg>
</body></html>
